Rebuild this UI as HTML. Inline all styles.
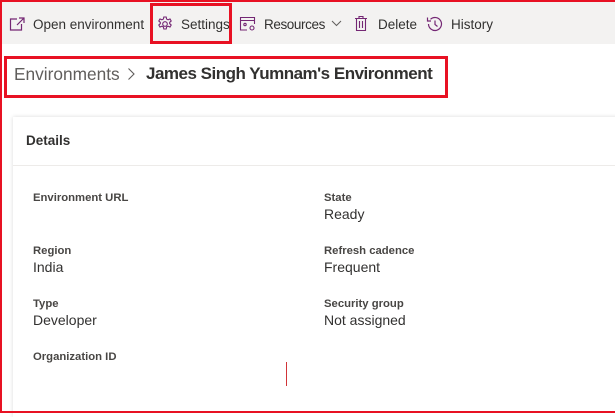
<!DOCTYPE html>
<html><head><style>
*{margin:0;padding:0;box-sizing:border-box}
body{width:615px;height:413px;overflow:hidden;background:#fff;font-family:"Liberation Sans",sans-serif;color:#323130;position:relative}
.frame{position:absolute;left:0;top:0;width:615px;height:413px;border:2px solid #e81123;border-right:none;z-index:10;pointer-events:none}
.tb{position:absolute;left:0;top:0;width:615px;height:44px;background:#f3f2f1}
.t{position:absolute;top:16px;font-size:13.5px;line-height:18px;color:#323130;white-space:nowrap}
svg{position:absolute}
.box{position:absolute;border:3px solid #e81123;z-index:5}
.bc{position:absolute;top:63px;font-size:17.3px;line-height:22px;white-space:nowrap}
.card{position:absolute;left:13px;top:117px;width:620px;height:300px;background:#fff;box-shadow:0 0 4px rgba(0,0,0,.15)}
.hd{position:absolute;left:0;top:0;width:100%;height:49px;border-bottom:1px solid #edebe9}
.lab{position:absolute;font-size:11.3px;font-weight:bold;color:#484644;line-height:14px;white-space:nowrap}
.val{position:absolute;font-size:14px;color:#323130;line-height:17px;white-space:nowrap}
</style></head><body>
<div class="tb"></div>
<svg style="left:9px;top:17px" width="16" height="14" viewBox="0 0 16 14" fill="none" stroke="#742774" stroke-width="1.2"><path d="M8 2H1.5v11h11V7"/><path d="M10 1h5v5M15 1l-7 7"/></svg>
<div class="t" style="left:33px">Open environment</div>
<svg style="left:157px;top:16px" width="16" height="16" viewBox="0 0 16 16" fill="none" stroke="#742774" stroke-width="1.1"><circle cx="8" cy="8" r="2.3"/><path d="M6.8 1h2.4l.4 2 1.5.8 1.9-.8 1.2 2-1.5 1.3v1.4l1.5 1.3-1.2 2-1.9-.8-1.5.8-.4 2H6.8l-.4-2-1.5-.8-1.9.8-1.2-2 1.5-1.3V6.3L1.8 5l1.2-2 1.9.8 1.5-.8z"/></svg>
<div class="t" style="left:181px">Settings</div>
<svg style="left:239px;top:16px" width="18" height="16" viewBox="0 0 18 16" fill="none" stroke="#742774" stroke-width="1.1"><path d="M8 14H1.5V1.5h14V8M1.5 4.5h14"/><circle cx="6" cy="8.5" r="1.2"/><circle cx="13" cy="12" r="2"/></svg>
<div class="t" style="left:264px;letter-spacing:-0.4px">Resources</div>
<svg style="left:331px;top:20px" width="11" height="7" viewBox="0 0 11 7" fill="none" stroke="#605e5c" stroke-width="1"><path d="M1 1l4.5 4.5L10 1"/></svg>
<svg style="left:354px;top:15px" width="14" height="17" viewBox="0 0 14 17" fill="none" stroke="#742774" stroke-width="1.1"><path d="M1 3.5h12M5 3.5V1.5h4v2M2.5 3.5v12h9v-12M5.5 6v7M8.5 6v7"/></svg>
<div class="t" style="left:378px">Delete</div>
<svg style="left:426px;top:16px" width="17" height="16" viewBox="0 0 17 16" fill="none" stroke="#742774" stroke-width="1.2"><path d="M2.5 8A6.5 6.5 0 1 0 4.5 3.3M1.5 1.5v3.5h3.5M9 4.5V8.5l2.5 2"/></svg>
<div class="t" style="left:451px">History</div>
<div class="box" style="left:150px;top:3px;width:82px;height:41px"></div>
<div class="bc" style="left:14px;color:#605e5c">Environments</div>
<svg style="left:127px;top:67px" width="9" height="14" viewBox="0 0 9 14" fill="none" stroke="#605e5c" stroke-width="1.1"><path d="M1.5 1.5l5.5 5.5-5.5 5.5"/></svg>
<div class="bc" style="left:146px;font-size:17px;letter-spacing:-0.5px;font-weight:bold;color:#323130">James Singh Yumnam's Environment</div>
<div class="box" style="left:4px;top:56px;width:444px;height:42px"></div>
<div class="card">
<div class="hd"></div>
<div style="position:absolute;left:13px;top:16px;font-size:13.5px;font-weight:bold;color:#323130">Details</div>
<div class="lab" style="left:20px;top:74px">Environment URL</div>
<div class="lab" style="left:311px;top:74px">State</div>
<div class="val" style="left:311px;top:89px">Ready</div>
<div class="lab" style="left:20px;top:127px">Region</div>
<div class="val" style="left:20px;top:142px">India</div>
<div class="lab" style="left:311px;top:127px">Refresh cadence</div>
<div class="val" style="left:311px;top:142px">Frequent</div>
<div class="lab" style="left:20px;top:180px">Type</div>
<div class="val" style="left:20px;top:195px">Developer</div>
<div class="lab" style="left:311px;top:180px">Security group</div>
<div class="val" style="left:311px;top:195px">Not assigned</div>
<div class="lab" style="left:20px;top:233px">Organization ID</div>
</div>
<div style="position:absolute;left:286px;top:362px;width:1px;height:24px;background:#d13438"></div>
<div class="frame"></div>
</body></html>
